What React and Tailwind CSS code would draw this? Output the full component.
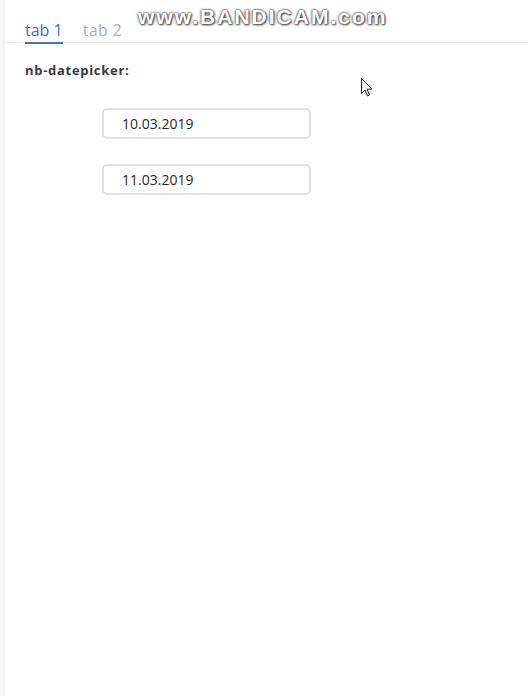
export default function App() {
  const dates = ['10.03.2019', '11.03.2019'];

  return (
    <div className="relative flex h-[696px] w-[528px] overflow-hidden bg-white">
      <div className="w-[5px] shrink-0 bg-[#f3f3f3]" />
      <div className="flex-1 font-['Open_Sans',sans-serif]">
        {/* Tabs */}
        <div className="flex gap-5 pl-5 pt-[19px] border-b border-[#ececec]">
          <div className="-mb-[2px] border-b-2 border-[#3f6fd6] text-[16px] leading-[23px] text-[#3f6fd6]">tab 1</div>
          <div className="-mb-[2px] border-b-2 border-transparent text-[16px] leading-[23px] tracking-[0.3px] text-[#a9b0ba]">tab 2</div>
        </div>

        <div className="pl-5 pt-[18px]">
          <div className="text-[13px] font-bold leading-[18px] tracking-[0.7px] text-[#3a3a3a]">nb-datepicker:</div>
          <div className="flex flex-col gap-[25px] pl-[77px] pt-[29px]">
            {dates.map((d) => (
              <div
                key={d}
                className="flex h-[31px] w-[209px] items-center rounded-[5px] border-2 border-[#dde1e8] px-[18px] text-[14px] text-[#2b2b2b]"
              >
                {d}
              </div>
            ))}
          </div>
        </div>
      </div>

      {/* recorder watermark */}
      <div className="absolute left-[138px] top-[4px] font-['Liberation_Sans',sans-serif] text-[21px] font-bold leading-[26px] tracking-[2px] text-white [text-shadow:0_0_2px_#555,0_0_3px_#555,1px_1px_2px_#444]">
        www.BANDICAM.com
      </div>

      {/* mouse cursor */}
      <svg className="absolute left-[361px] top-[78px]" width="12" height="19" viewBox="0 0 12 19">
        <path d="M0.5 0.5 L0.5 15.5 L4 12 L6.5 18 L8.5 17 L6 11.2 L11 11.2 Z" fill="white" stroke="#222" strokeWidth="1" strokeLinejoin="round" />
      </svg>
    </div>
  );
}
